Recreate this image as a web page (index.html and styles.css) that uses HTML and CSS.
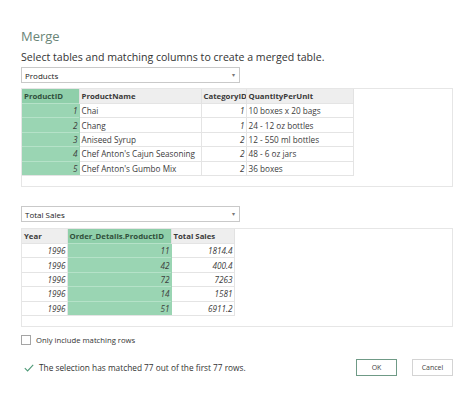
FILE: index.html
```html
<!DOCTYPE html>
<html>
<head>
<meta charset="utf-8">
<link rel="stylesheet" href="styles.css">
</head>
<body>
<div class="dialog">
  <h1 class="title">Merge</h1>
  <p class="subtitle">Select tables and matching columns to create a merged table.</p>

  <div class="combo"><span>Products</span><span class="arrow">&#9662;</span></div>
  <div class="panel panel-1">
    <table class="grid grid-1">
      <colgroup><col style="width:57px"><col style="width:122px"><col style="width:45px"><col style="width:107px"></colgroup>
      <thead><tr><th class="sel">ProductID</th><th>ProductName</th><th>CategoryID</th><th>QuantityPerUnit</th></tr></thead>
      <tbody>
        <tr><td class="sel num">1</td><td>Chai</td><td class="num">1</td><td>10 boxes x 20 bags</td></tr>
        <tr><td class="sel num">2</td><td>Chang</td><td class="num">1</td><td>24 - 12 oz bottles</td></tr>
        <tr><td class="sel num">3</td><td>Aniseed Syrup</td><td class="num">2</td><td>12 - 550 ml bottles</td></tr>
        <tr><td class="sel num">4</td><td>Chef Anton's Cajun Seasoning</td><td class="num">2</td><td>48 - 6 oz jars</td></tr>
        <tr><td class="sel num">5</td><td>Chef Anton's Gumbo Mix</td><td class="num">2</td><td>36 boxes</td></tr>
      </tbody>
    </table>
  </div>

  <div class="combo combo-2"><span>Total Sales</span><span class="arrow">&#9662;</span></div>
  <div class="panel panel-2">
    <table class="grid grid-2">
      <colgroup><col style="width:45px"><col style="width:104px"><col style="width:63px"></colgroup>
      <thead><tr><th>Year</th><th class="sel">Order_Details.ProductID</th><th>Total Sales</th></tr></thead>
      <tbody>
        <tr><td class="num">1996</td><td class="sel num">11</td><td class="num">1814.4</td></tr>
        <tr><td class="num">1996</td><td class="sel num">42</td><td class="num">400.4</td></tr>
        <tr><td class="num">1996</td><td class="sel num">72</td><td class="num">7263</td></tr>
        <tr><td class="num">1996</td><td class="sel num">14</td><td class="num">1581</td></tr>
        <tr><td class="num">1996</td><td class="sel num">51</td><td class="num">6911.2</td></tr>
      </tbody>
    </table>
  </div>

  <label class="check"><span class="box"></span>Only include matching rows</label>

  <div class="footer">
    <div class="status">
      <svg class="tick" width="10" height="8" viewBox="0 0 10 8"><path d="M0.8 4.2 L3.6 6.9 L9.2 0.8" fill="none" stroke="#4f9a78" stroke-width="1.1"/></svg>
      <span>The selection has matched 77 out of the first 77 rows.</span>
    </div>
    <div class="buttons">
      <button class="btn btn-ok">OK</button>
      <button class="btn">Cancel</button>
    </div>
  </div>
</div>
</body>
</html>
```

FILE: styles.css
```css
html, body {
  margin: 0;
  padding: 0;
  background: #ffffff;
}
body {
  width: 474px;
  height: 398px;
  overflow: hidden;
  font-family: "Open Sans", "Noto Sans", sans-serif;
  color: #333333;
}
.dialog {
  padding: 28px 21px 0 21px;
}
.title {
  margin: 0;
  font-weight: 400;
  font-size: 13px;
  line-height: 16px;
  color: #6a8577;
}
.subtitle {
  margin: 6px 0 0 0;
  font-size: 10.6px;
  line-height: 14px;
  color: #333333;
  white-space: nowrap;
}
.combo {
  margin-top: 3px;
  width: 214px;
  height: 14px;
  border: 1px solid #c9c9c9;
  display: flex;
  align-items: center;
  justify-content: space-between;
  padding: 0 0 0 3px;
  font-size: 8px;
  color: #222;
}
.combo .arrow {
  font-size: 6px;
  color: #777;
  width: 12px;
  text-align: center;
}
.combo-2 {
  margin-top: 19px;
}
.panel {
  margin-top: 5px;
  width: 430px;
  border: 1px solid #e6e6e6;
}
.panel-2 { margin-top: 6px; }
.panel-1 { height: 97px; }
.panel-2 { height: 97px; }
.grid {
  border-collapse: collapse;
  table-layout: fixed;
  font-family: "Open Sans", "Noto Sans", sans-serif;
  font-size: 8.2px;
  color: #3c3c3c;
}
.grid-1 { width: 331px; }
.grid-2 { width: 212px; }
.grid th {
  height: 14px;
  padding: 0 2px;
  text-align: left;
  font-weight: 700;
  font-size: 7.8px;
  background: #eeeeee;
  border-right: 1px solid #e2e2e2;
  white-space: nowrap;
  overflow: hidden;
  color: #3a3a3a;
}
.grid td {
  height: 13.4px;
  padding: 0 2px;
  border-top: 1px solid #e4e4e4;
  border-right: 1px solid #e4e4e4;
  white-space: nowrap;
  overflow: hidden;
}
.grid tbody tr:last-child td {
  border-bottom: 1px solid #e4e4e4;
}
.grid .num {
  text-align: right;
  font-style: italic;
  padding-right: 1px;
}
.grid th.sel {
  background: #8fcfaa;
  color: #2f4f3c;
}
.grid td.sel {
  background: #9ad5b3;
  border-top-color: #b5e2c8;
  border-right-color: #9ad5b3;
}
.check {
  margin-top: 7px;
  display: flex;
  align-items: center;
  font-size: 7.7px;
  color: #333;
  height: 11px;
}
.check .box {
  width: 8px;
  height: 8px;
  border: 1px solid #a5a5a5;
  margin-right: 5px;
  background: #fff;
}
.footer {
  margin-top: 14px;
  display: flex;
  align-items: center;
  justify-content: space-between;
  height: 17px;
}
.status {
  display: flex;
  align-items: center;
  padding-left: 3px;
  font-size: 8.3px;
  color: #333;
}
.tick {
  margin-right: 5px;
}
.buttons {
  display: flex;
  gap: 15px;
}
.btn {
  width: 41px;
  height: 17px;
  padding: 0;
  background: #ffffff;
  border: 1px solid #d4d4d4;
  font-family: "Open Sans", "Noto Sans", sans-serif;
  font-size: 7px;
  color: #444;
}
.btn-ok {
  border-color: #6f9a86;
}
```
